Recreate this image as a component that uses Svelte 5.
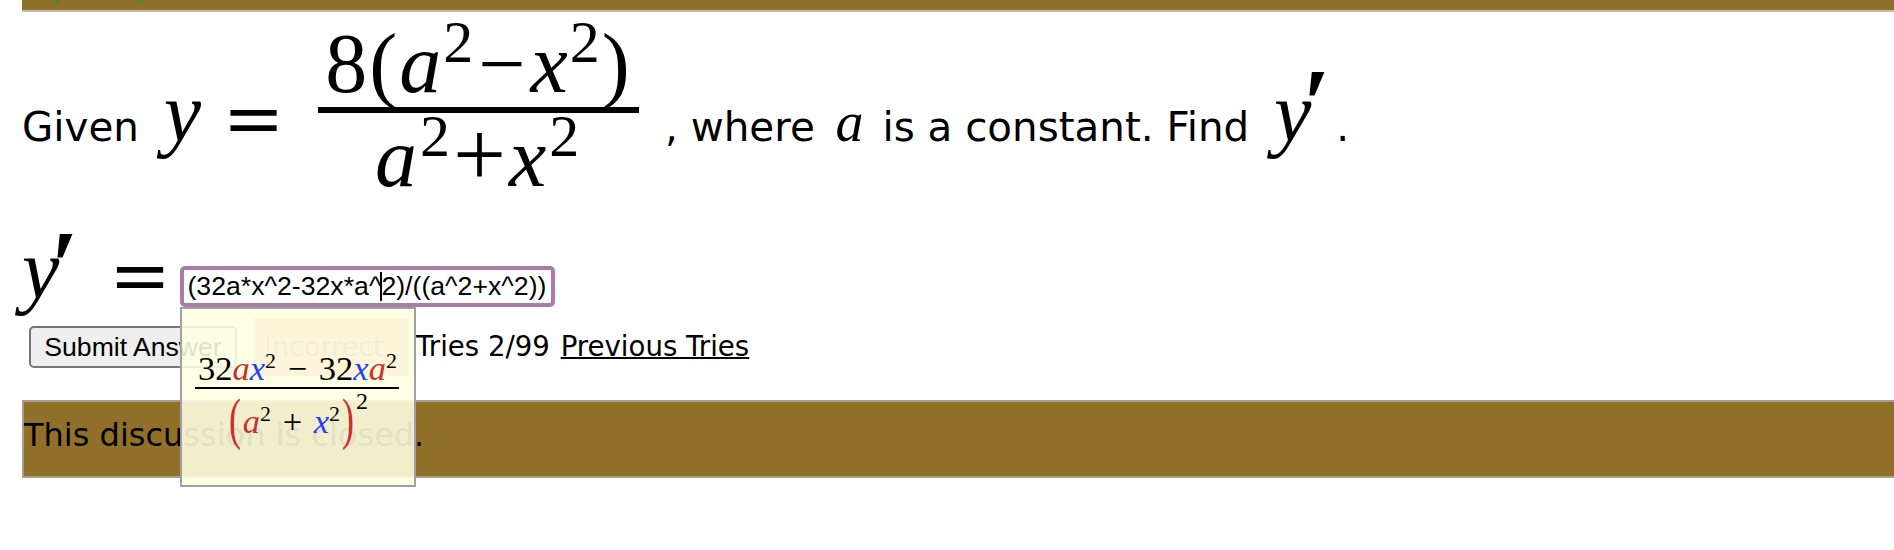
<script>
	const tries = 'Tries 2/99'
</script>

<div class="page">
	<div class="top-band"></div>

	<p class="question">
		Given <span class="m y">y</span><span class="m eq">=</span><span class="frac">
			<span class="num">8(<i>a</i><sup>2</sup><span class="op">−</span><i>x</i><sup>2</sup>)</span>
			<span class="den"><i>a</i><sup>2</sup><span class="op">+</span><i>x</i><sup>2</sup></span>
		</span><span class="after">, where <i class="small-a">a</i> is a constant. Find <span class="m y last">y<span class="prime">′</span></span> .</span>
	</p>

	<div class="answer-row">
		<span class="m y">y<span class="prime">′</span></span><span class="m eq">=</span>
		<div class="input-wrap">
			<div class="input">(32a*x^2-32x*a^<span class="caret"></span>2)/((a^2+x^2))</div>
			<div class="preview">
				<div class="p-frac">
					<div class="p-num">32<i class="red">a</i><i class="blue">x</i><sup>2</sup> <span class="p-op">−</span> 32<i class="blue">x</i><i class="red">a</i><sup>2</sup></div>
					<div class="p-den"><span class="paren red">(</span><i class="red">a</i><sup>2</sup> <span class="p-op">+</span> <i class="blue">x</i><sup>2</sup><span class="paren red">)</span><sup class="outer">2</sup></div>
				</div>
			</div>
		</div>
	</div>

	<div class="status-row">
		<button class="submit">Submit Answer</button>
		<span class="verdict">Incorrect</span>
		<span class="tries">{tries} <a href="#prev">Previous Tries</a></span>
	</div>

	<div class="closed">This discussion is closed.</div>
</div>

<style>
	:global(body) {
		margin: 0;
		background: #fff;
		color: #000;
	}

	.page {
		box-sizing: border-box;
		min-height: 550px;
		padding-left: 22px;
		overflow: hidden;
		font-family: "DejaVu Sans", Verdana, sans-serif;
	}

	.top-band {
		height: 10px;
		background:
			radial-gradient(circle at 35px 0, #5f8428 0 3px, transparent 4px),
			radial-gradient(circle at 118px 0, #5f8428 0 3px, transparent 4px),
			#917029;
		border-bottom: 2px solid #c2bcb0;
	}

	.question {
		margin: 0;
		height: 184px;
		font-size: 40.4px;
		line-height: 190px;
		white-space: nowrap;
	}

	.m {
		font-family: "Liberation Serif", "Times New Roman", serif;
		font-size: 84px;
	}

	.y {
		font-style: italic;
		margin-left: 12px;
	}

	.last {
		margin-right: -6px;
	}

	.eq {
		display: inline-block;
		margin-left: 26px;
		font-size: 94px;
		line-height: 1;
		-webkit-text-stroke: 2.5px #000;
		transform: scaleY(0.8);
		vertical-align: -11px;
	}

	.prime {
		font-style: italic;
		font-weight: 700;
		font-size: 100px;
		margin-left: -10px;
		position: relative;
		top: -4px;
	}

	.frac {
		display: inline-block;
		vertical-align: -45px;
		margin-left: 38px;
		width: 321px;
		text-align: center;
		font-family: "Liberation Serif", "Times New Roman", serif;
		font-size: 84px;
	}

	.num {
		display: block;
		border-bottom: 6px solid #000;
		height: 95px;
		line-height: 104px;
		letter-spacing: 2px;
	}

	.den {
		display: block;
		height: 88px;
		line-height: 90px;
		letter-spacing: 3px;
	}

	.den .op {
		font-size: 94px;
		margin: 0;
		line-height: 0;
	}

	.frac sup {
		font-size: 60px;
		line-height: 0;
		vertical-align: 30px;
	}

	.op {
		margin: 0 3px;
	}

	.after {
		margin-left: 26px;
	}

	.small-a {
		font-family: "Liberation Serif", "Times New Roman", serif;
		font-size: 56px;
		margin: 0 6px 0 8px;
	}

	.answer-row {
		display: flex;
		align-items: flex-start;
		height: 80px;
		margin-top: 42px;
		line-height: 84px;
	}

	.answer-row .y {
		margin-left: 0;
		margin-top: -15px;
	}

	.answer-row .prime {
		top: 1px;
	}

	.answer-row .eq {
		margin-left: 36px;
		margin-top: -8px;
	}

	.input-wrap {
		position: relative;
		margin-left: 14px;
		margin-top: 28px;
	}

	.input {
		box-sizing: border-box;
		width: 375px;
		height: 41px;
		border: 4px solid #a97ba9;
		border-radius: 5px;
		padding-left: 3px;
		font-family: "Liberation Sans", Arial, sans-serif;
		font-size: 26.67px;
		line-height: 33px;
		white-space: nowrap;
	}

	.caret {
		display: inline-block;
		width: 2px;
		height: 29px;
		margin: 0 -1px;
		background: #000;
		vertical-align: -6px;
	}

	.preview {
		position: absolute;
		left: 0;
		top: 41px;
		z-index: 2;
		box-sizing: border-box;
		width: 236px;
		height: 180px;
		border: 2px solid #a0a0a0;
		background: rgba(255, 255, 226, 0.88);
		font-family: "Liberation Serif", "Times New Roman", serif;
		font-size: 34.5px;
		line-height: normal;
	}

	.p-frac {
		margin: 40px 0 0 13px;
		width: 204px;
		text-align: center;
	}

	.p-num {
		height: 38px;
		border-bottom: 2px solid #000;
		white-space: nowrap;
	}

	.p-den {
		margin-top: 12px;
		white-space: nowrap;
	}

	.preview sup {
		font-size: 22px;
		line-height: 0;
		vertical-align: 12px;
	}

	.preview sup.outer {
		font-size: 24px;
		vertical-align: 24px;
	}

	.p-op {
		margin: 0 3px;
	}

	.paren {
		display: inline-block;
		font-size: 48px;
		line-height: 0;
		transform: scale(0.75, 1.2);
		vertical-align: -2px;
	}

	.red {
		color: #c9302c;
	}

	.blue {
		color: #1b3fff;
	}

	.status-row {
		display: flex;
		align-items: center;
		margin-left: 7px;
		height: 58px;
	}

	.submit {
		box-sizing: border-box;
		width: 208px;
		height: 42px;
		padding: 0;
		border: 2px solid #767676;
		border-radius: 5px;
		background: #efefef;
		font-family: "Liberation Sans", Arial, sans-serif;
		font-size: 26.6px;
		color: #000;
	}

	.verdict {
		box-sizing: border-box;
		width: 155px;
		height: 58px;
		margin-left: 17px;
		padding-left: 10px;
		background: #f3a79f;
		color: #707070;
		font-size: 27px;
		line-height: 58px;
		white-space: nowrap;
	}

	.tries {
		margin-left: 7px;
		font-size: 27.6px;
		line-height: 54px;
		white-space: nowrap;
	}

	.tries a {
		color: #000;
		text-decoration: underline;
		text-decoration-thickness: 2px;
		margin-left: 2px;
	}

	.closed {
		box-sizing: border-box;
		height: 78px;
		margin-top: 24px;
		border: 2px solid #ab9e88;
		border-right: 0;
		background: #917029;
		font-size: 32px;
		line-height: 66px;
	}
</style>
